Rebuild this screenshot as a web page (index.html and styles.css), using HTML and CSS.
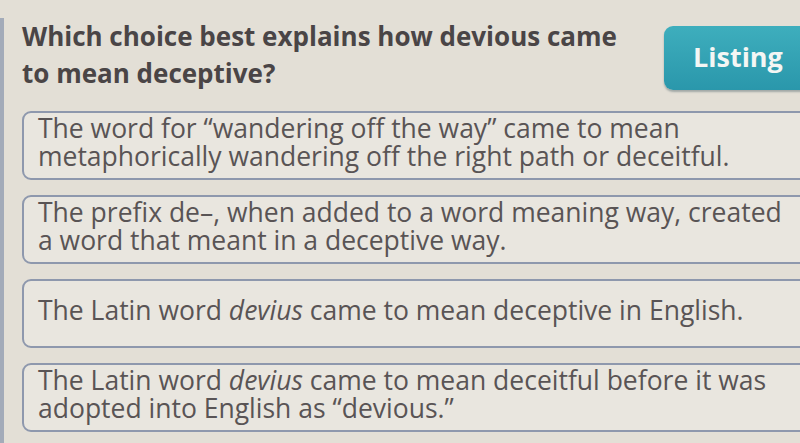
FILE: index.html
```html
<!DOCTYPE html>
<html lang="en">
<head>
<meta charset="utf-8">
<title>Question</title>
<link rel="stylesheet" href="styles.css">
</head>
<body>
<div class="frame">
  <div class="header">
    <h1 class="question">Which choice best explains how devious came<br>to mean deceptive?</h1>
    <button class="listing">Listing</button>
  </div>
  <div class="options">
    <div class="option"><p>The word for “wandering off the way” came to mean<br>metaphorically wandering off the right path or deceitful.</p></div>
    <div class="option"><p>The prefix de–, when added to a word meaning way, created<br>a word that meant in a deceptive way.</p></div>
    <div class="option"><p>The Latin word <em>devius</em> came to mean deceptive in English.</p></div>
    <div class="option"><p>The Latin word <em>devius</em> came to mean deceitful before it was<br>adopted into English as “devious.”</p></div>
  </div>
</div>
</body>
</html>
```
FILE: styles.css
```css
html, body {
  margin: 0;
  padding: 0;
}
body {
  background: #e3dfd6;
  width: 800px;
  height: 443px;
  overflow: hidden;
  font-family: "Open Sans", "Noto Sans", sans-serif;
}
.frame {
  margin-top: 18px;
  border-left: 4px solid #a3abb9;
  padding-left: 18px;
  height: 425px;
}
.header {
  display: flex;
  justify-content: space-between;
  align-items: flex-start;
}
.question {
  margin: 0;
  font-size: 26px;
  line-height: 37px;
  font-weight: 700;
  color: #4a4546;
}
.listing {
  margin-top: 8px;
  margin-right: -20px;
  width: 156px;
  height: 64px;
  border: none;
  border-radius: 9px;
  background: linear-gradient(#3eaebd, #2a97ab);
  box-shadow: 0 2px 2px rgba(40, 70, 80, 0.35);
  color: #f4f6f4;
  font-family: "Open Sans", "Noto Sans", sans-serif;
  font-weight: 700;
  font-size: 27px;
  padding: 0 0 4px 29px;
  text-align: left;
}
.options {
  margin-top: 19px;
  display: flex;
  flex-direction: column;
  gap: 15px;
  margin-right: -40px;
}
.option {
  box-sizing: border-box;
  height: 69px;
  border: 2px solid #8e98ad;
  border-radius: 9px;
  background: #e9e6df;
  display: flex;
  align-items: center;
  padding: 0 0 7px 14px;
}
.option p {
  margin: 0;
  font-size: 26.5px;
  line-height: 28px;
  color: #595455;
  white-space: nowrap;
}
.option em {
  font-style: italic;
}
```
